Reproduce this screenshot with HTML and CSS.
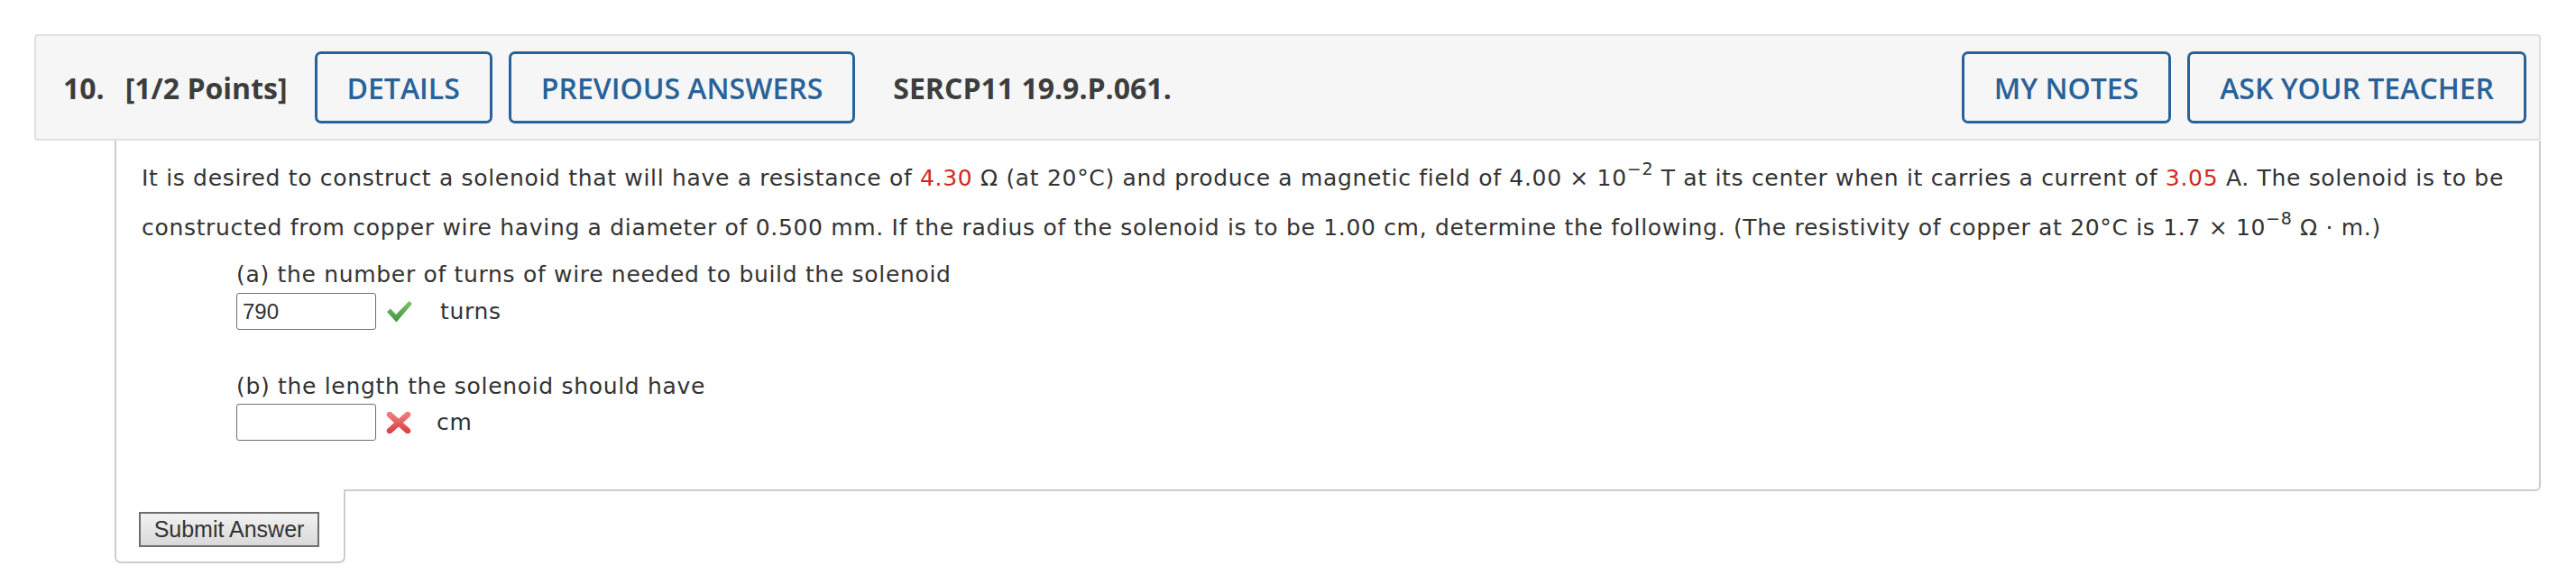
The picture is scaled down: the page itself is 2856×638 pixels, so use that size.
FILE: index.html
```html
<!DOCTYPE html>
<html lang="en">
<head>
<meta charset="utf-8">
<title>Question 10</title>
<link rel="stylesheet" href="styles.css">
</head>
<body>
<div class="page">
  <div class="qhead">
    <span class="qnum">10.</span>
    <span class="qpts">[1/2 Points]</span>
    <button class="hbtn">DETAILS</button>
    <button class="hbtn">PREVIOUS ANSWERS</button>
    <span class="qcode">SERCP11 19.9.P.061.</span>
    <button class="hbtn push">MY NOTES</button>
    <button class="hbtn">ASK YOUR TEACHER</button>
  </div>
  <div class="qbody">
    <p class="qtext">It is desired to construct a solenoid that will have a resistance of <span class="red">4.30</span> Ω (at 20°C) and produce a magnetic field of 4.00 × 10<sup class="sup">−2</sup> T at its center when it carries a current of <span class="red">3.05</span> A. The solenoid is to be constructed from copper wire having a diameter of 0.500 mm. If the radius of the solenoid is to be 1.00 cm, determine the following. (The resistivity of copper at 20°C is 1.7 × 10<sup class="sup">−8</sup> Ω · m.)</p>
    <div class="part">
      <div class="plabel">(a) the number of turns of wire needed to build the solenoid</div>
      <div class="arow">
        <input class="ans" type="text" value="790">
        <svg class="mark" width="30" height="26" viewBox="0 0 30 26">
          <defs>
            <linearGradient id="gck" x1="0" y1="0" x2="0" y2="1">
              <stop offset="0" stop-color="#7cc46a"/>
              <stop offset="1" stop-color="#3f9240"/>
            </linearGradient>
          </defs>
          <path d="M1 13 L5 9.5 L11 16 L25.5 1 L29 4 L11.5 24.5 Z" fill="url(#gck)"/>
        </svg>
        <span class="unit">turns</span>
      </div>
    </div>
    <div class="part partb">
      <div class="plabel">(b) the length the solenoid should have</div>
      <div class="arow">
        <input class="ans" type="text" value="">
        <svg class="mark" width="28" height="24" viewBox="0 0 28 24">
          <defs>
            <linearGradient id="gx" x1="0" y1="0" x2="0" y2="1">
              <stop offset="0" stop-color="#ef7a7a"/>
              <stop offset="1" stop-color="#d84646"/>
            </linearGradient>
          </defs>
          <path d="M4 3 L24 21 M24 3 L4 21" stroke="url(#gx)" stroke-width="6.5" stroke-linecap="round" fill="none"/>
        </svg>
        <span class="unit unit-cm">cm</span>
      </div>
    </div>
  </div>
  <div class="qsubmit">
    <button class="submit">Submit Answer</button>
  </div>
</div>
</body>
</html>
```
FILE: styles.css
```css
html, body {
  margin: 0;
  padding: 0;
  background: #ffffff;
}

.page {
  padding: 38px 39px 0 38px;
}

.qhead {
  box-sizing: border-box;
  height: 118px;
  display: flex;
  align-items: center;
  background: #f6f6f6;
  border: 2px solid #e0e0e0;
  border-radius: 4px;
  padding: 0 14px 0 30px;
  font-family: "Open Sans", "Liberation Sans", sans-serif;
  color: #3d3d3d;
}

.qnum,
.qpts,
.qcode {
  font-size: 32px;
  font-weight: 700;
  white-space: nowrap;
}

.qnum {
  margin-right: 23px;
}

.qpts {
  margin-right: 30px;
}

.qcode {
  margin-left: 24px;
}

.hbtn {
  box-sizing: border-box;
  height: 80px;
  display: inline-flex;
  align-items: center;
  padding: 0 33px;
  margin: 0 18px 0 0;
  background: #f6f6f6;
  border: 3px solid #286298;
  border-radius: 7px;
  font-family: "Open Sans", "Liberation Sans", sans-serif;
  font-size: 32px;
  font-weight: 600;
  color: #286298;
  white-space: nowrap;
}

.hbtn:last-child {
  margin-right: 0;
}

.push {
  margin-left: auto;
}

.qbody {
  margin-left: 89px;
  border: 2px solid #cdcdcd;
  border-top: none;
  border-bottom-right-radius: 6px;
  padding: 14px 20px 54px 28px;
  font-family: Verdana, "DejaVu Sans", sans-serif;
  font-size: 25px;
  letter-spacing: 0.68px;
  color: #333333;
  background: #ffffff;
}

.qtext {
  margin: 0;
  line-height: 55px;
}

.red {
  color: #d1291f;
}

.sup {
  font-size: 19px;
  line-height: 0;
  vertical-align: 12px;
}

.part {
  margin: 10px 0 0 105px;
}

.partb {
  margin-top: 48px;
}

.plabel {
  line-height: 30px;
}

.arow {
  display: flex;
  align-items: center;
  margin-top: 5px;
}

.partb .arow {
  margin-top: 4px;
}

.ans {
  box-sizing: border-box;
  width: 155px;
  height: 41px;
  margin: 0;
  padding: 0 6px;
  border: 1px solid #707070;
  border-radius: 3px;
  font-family: "Liberation Sans", Arial, sans-serif;
  font-size: 24px;
  letter-spacing: 0;
  color: #333333;
  background: #ffffff;
}

.mark {
  display: block;
  margin-left: 11px;
}

.unit {
  margin-left: 30px;
}

.unit-cm {
  margin-left: 28px;
}

.qsubmit {
  box-sizing: border-box;
  width: 256px;
  margin: -2px 0 0 89px;
  padding: 25px 0 16px 25px;
  border: 2px solid #cdcdcd;
  border-top: none;
  border-radius: 0 0 7px 7px;
  background: #ffffff;
}

.submit {
  display: block;
  box-sizing: border-box;
  width: 200px;
  height: 39px;
  margin: 0;
  padding: 0;
  border: 2px solid #6e6e6e;
  background: linear-gradient(#f2f2f2, #d9d9d9);
  font-family: "Liberation Sans", Arial, sans-serif;
  font-size: 25px;
  color: #333333;
}
```
